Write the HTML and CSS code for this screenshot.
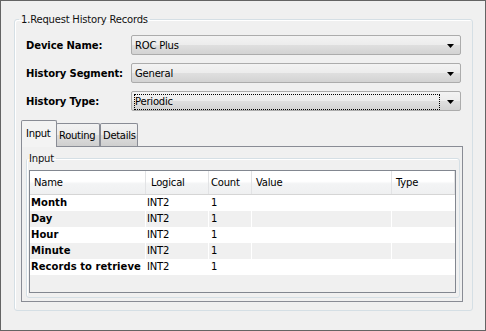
FILE: index.html
```html
<!DOCTYPE html>
<html>
<head>
<meta charset="utf-8">
<link rel="stylesheet" href="styles.css">
</head>
<body>
<div class="window">
  <fieldset class="group outer">
    <legend>1.Request History Records</legend>
    <div class="field">
      <label>Device Name:</label>
      <div class="combo"><span class="val">ROC Plus</span><span class="btn"><svg width="7" height="4" viewBox="0 0 7 4"><polygon points="0,0 7,0 3.5,4" fill="#000"/></svg></span></div>
    </div>
    <div class="field">
      <label>History Segment:</label>
      <div class="combo"><span class="val">General</span><span class="btn"><svg width="7" height="4" viewBox="0 0 7 4"><polygon points="0,0 7,0 3.5,4" fill="#000"/></svg></span></div>
    </div>
    <div class="field">
      <label>History Type:</label>
      <div class="combo focus"><span class="val">Periodic</span><span class="btn"><svg width="7" height="4" viewBox="0 0 7 4"><polygon points="0,0 7,0 3.5,4" fill="#000"/></svg></span></div>
    </div>
    <div class="tabctl">
      <div class="tabs">
        <div class="tab active">Input</div>
        <div class="tab routing">Routing</div>
        <div class="tab details">Details</div>
      </div>
      <div class="panel">
        <fieldset class="group inner">
          <legend>Input</legend>
          <div class="grid">
            <div class="row hdr">
              <span class="c1">Name</span><span class="c2">Logical</span><span class="c3">Count</span><span class="c4">Value</span><span class="c5">Type</span>
            </div>
            <div class="body">
              <div class="row"><span class="c1">Month</span><span class="c2">INT2</span><span class="c3">1</span><span class="c4"></span><span class="c5"></span></div>
              <div class="row"><span class="c1">Day</span><span class="c2">INT2</span><span class="c3">1</span><span class="c4"></span><span class="c5"></span></div>
              <div class="row"><span class="c1">Hour</span><span class="c2">INT2</span><span class="c3">1</span><span class="c4"></span><span class="c5"></span></div>
              <div class="row"><span class="c1">Minute</span><span class="c2">INT2</span><span class="c3">1</span><span class="c4"></span><span class="c5"></span></div>
              <div class="row"><span class="c1">Records to retrieve</span><span class="c2">INT2</span><span class="c3">1</span><span class="c4"></span><span class="c5"></span></div>
            </div>
          </div>
        </fieldset>
      </div>
    </div>
  </fieldset>
</div>
</body>
</html>
```

FILE: styles.css
```css
html, body {
  margin: 0;
  padding: 0;
}
body {
  font-family: "DejaVu Sans", sans-serif;
  font-size: 10px;
  letter-spacing: -0.2px;
  color: #000;
  background: #f0f0f0;
}
.window {
  width: 486px;
  height: 331px;
  box-sizing: border-box;
  border: 1px solid #646464;
  background: #f0f0f0;
  padding: 12px 12px 0 13px;
}
.group {
  margin: 0;
  min-width: 0;
  border: 1px solid #d5dfe5;
  border-radius: 3px;
  box-shadow: inset 1px 1px 0 #fff;
}
.group legend {
  padding: 0 2px;
  margin-left: -2px;
  line-height: 13px;
  height: 13px;
  color: #111;
}
.outer {
  padding: 9px 9px 8px 6px;
}
.field {
  display: flex;
  align-items: center;
  height: 20px;
  padding: 0 2px 0 5px;
}
.field + .field {
  margin-top: 8px;
}
.field label {
  width: 105px;
  font-weight: bold;
  letter-spacing: -0.1px;
}
.combo {
  width: 330px;
  height: 20px;
  box-sizing: border-box;
  border: 1px solid #acacac;
  border-radius: 2px;
  padding: 1px;
  display: flex;
  background: linear-gradient(#f3f3f3 0%, #ececec 50%, #dfdfdf 50%, #d3d3d3 100%);
}
.combo .val {
  flex: 1;
  margin: 1px;
  box-sizing: border-box;
  height: 16px;
  border: 1px dotted transparent;
  line-height: 14px;
  padding-left: 0;
}
.combo.focus .val {
  border-color: #000;
}
.combo .btn {
  width: 18px;
  display: flex;
  align-items: center;
  justify-content: center;
  padding-top: 2px;
  box-sizing: border-box;
}
.combo .btn svg {
  display: block;
}
.tabctl {
  margin-top: 9px;
}
.tabs {
  display: flex;
  align-items: flex-end;
  height: 26px;
}
.tab {
  box-sizing: border-box;
  height: 23px;
  border: 1px solid #898c95;
  border-bottom: 0;
  border-radius: 2px 2px 0 0;
  padding: 5px 0 0 2px;
  line-height: 13px;
  letter-spacing: -0.3px;
  white-space: nowrap;
  background: linear-gradient(#f2f2f2 0%, #ebebeb 50%, #dddddd 50%, #cfcfcf 100%);
}
.tab.active {
  width: 36px;
  height: 27px;
  margin-bottom: -1px;
  padding: 6px 0 0 4px;
  position: relative;
  z-index: 1;
  background: #f3f3f3;
}
.tab.routing {
  width: 44px;
  margin-left: -1px;
}
.tab.details {
  width: 38px;
}
.panel {
  height: 156px;
  box-sizing: border-box;
  border: 1px solid #898c95;
  padding: 5px 2px 3px 4px;
  background: #f0f0f0;
}
.inner {
  padding: 5px 3px 4px 2px;
}
.inner legend {
  color: #111;
}
.grid {
  height: 123px;
  box-sizing: border-box;
  border: 1px solid #828790;
  background: #f0f0f0;
  overflow: hidden;
}
.row {
  display: grid;
  grid-template-columns: 116px 63px 43px 140px 63px;
  height: 16px;
  line-height: 16px;
}
.row > span {
  box-sizing: border-box;
  border-right: 1px solid #fff;
  white-space: nowrap;
  overflow: hidden;
  padding-left: 1px;
}
.row > span.c5 {
  border-right: 0;
}
.row > .c3 {
  padding-left: 2px;
}
.body .row {
  background: #fff;
}
.body .row:nth-child(even) {
  background: #f0f0f0;
}
.body .c1 {
  font-weight: bold;
  letter-spacing: 0.05px;
}
.row.hdr {
  height: 24px;
  box-sizing: border-box;
  line-height: 23px;
  border-bottom: 1px solid #d5d5d5;
  background: linear-gradient(#ffffff 0%, #ffffff 45%, #f3f4f5 55%, #eff0f1 100%);
}
.row.hdr > span {
  border-right: 1px solid #e2e3e5;
  padding-left: 4px;
}
.row.hdr > .c2 {
  padding-left: 5px;
}
.row.hdr > .c3 {
  padding-left: 2px;
}
.row.hdr > .c5 {
  border-right: 1px solid #e2e3e5;
}
```
